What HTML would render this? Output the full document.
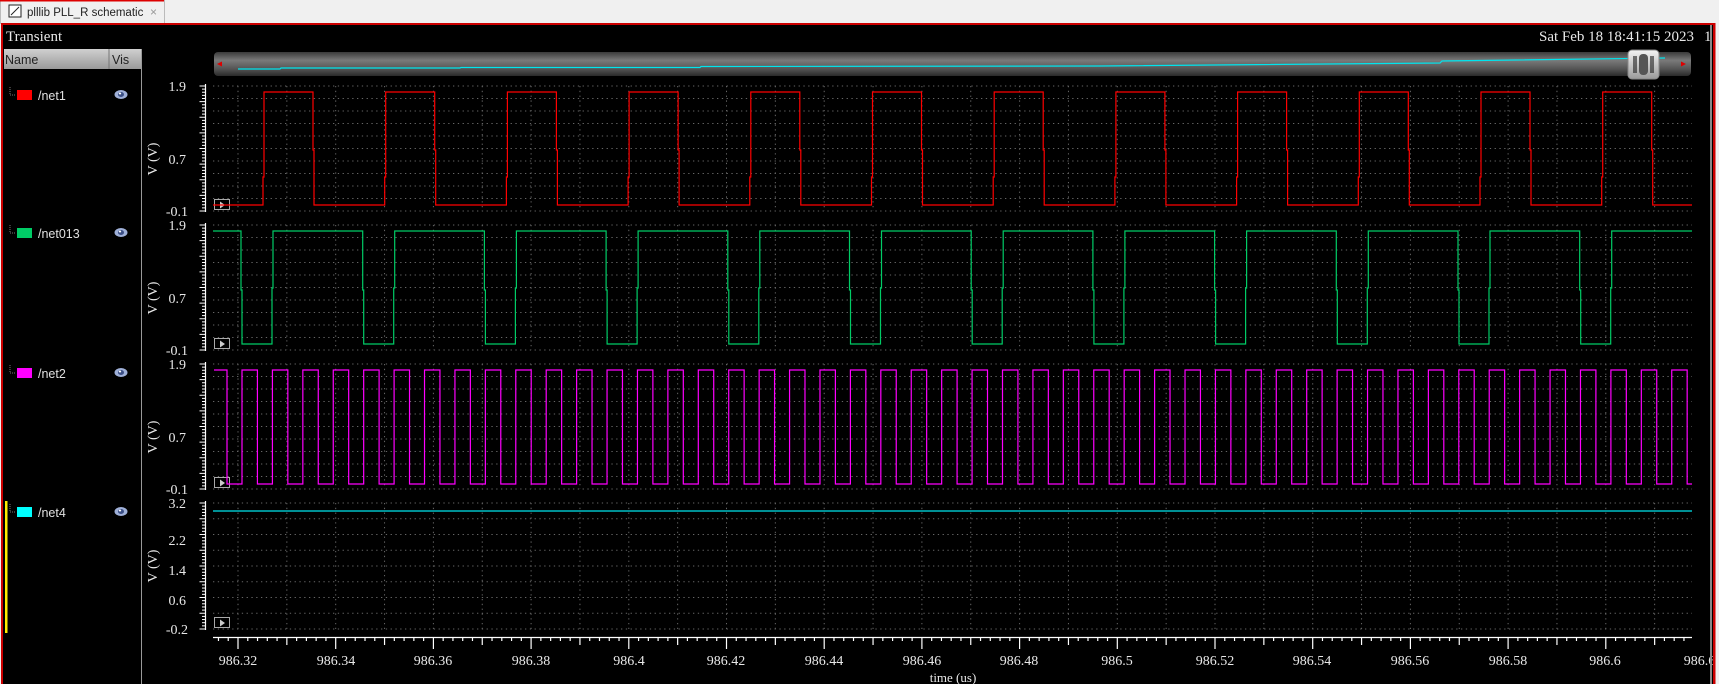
<!DOCTYPE html>
<html><head><meta charset="utf-8">
<style>
html,body{margin:0;padding:0;background:#f0f0f0;width:1719px;height:684px;overflow:hidden}
svg{display:block}
.s{font-family:"Liberation Serif",serif;fill:#e8e8e8}
.a{font-family:"Liberation Sans",sans-serif}
</style></head><body>
<svg id="sv" width="1719" height="684" viewBox="0 0 1719 684" xmlns="http://www.w3.org/2000/svg">
<defs>
<linearGradient id="hd" x1="0" y1="0" x2="0" y2="1"><stop offset="0" stop-color="#d0d0d0"/><stop offset="1" stop-color="#9a9a9a"/></linearGradient>
<linearGradient id="sb" x1="0" y1="0" x2="0" y2="1"><stop offset="0" stop-color="#3a3a3a"/><stop offset="0.35" stop-color="#7a7a7a"/><stop offset="0.7" stop-color="#555"/><stop offset="1" stop-color="#2a2a2a"/></linearGradient>
<linearGradient id="th" x1="0" y1="0" x2="0" y2="1"><stop offset="0" stop-color="#f4f4f4"/><stop offset="1" stop-color="#9a9a9a"/></linearGradient>
</defs>
<rect x="0" y="0" width="1719" height="684" fill="#f0f0f0"/>
<!-- tab -->
<rect x="0.5" y="0.5" width="164" height="23" fill="#f0f0f0" stroke="#bbb"/>
<rect x="0" y="0" width="164" height="1.5" fill="#d00"/>
<rect x="9" y="5" width="12" height="12" fill="#fff" stroke="#222"/>
<line x1="11" y1="15" x2="19" y2="7" stroke="#222"/>
<text x="27" y="16" class="a" font-size="11.5" fill="#222">plllib PLL_R schematic</text>
<text x="150" y="16" class="a" font-size="12" fill="#999">×</text>
<!-- frame -->
<rect x="1" y="23" width="1718" height="661" fill="#cc0000"/>
<rect x="3" y="25" width="1711" height="659" fill="#000"/>
<text x="6" y="41" class="s" font-size="15">Transient</text>
<text x="1694" y="41" class="s" font-size="15" text-anchor="end">Sat Feb 18 18:41:15 2023</text>
<text x="1704" y="41" class="s" font-size="15">1</text>
<!-- left panel -->
<rect x="4" y="49" width="137" height="20" fill="url(#hd)"/>
<line x1="109" y1="49" x2="109" y2="69" stroke="#777"/>
<text x="5" y="64" class="a" font-size="12.5" fill="#222">Name</text>
<text x="112" y="64" class="a" font-size="12.5" fill="#222">Vis</text>
<line x1="141.5" y1="49" x2="141.5" y2="684" stroke="#999"/>
<rect x="5" y="501" width="2.5" height="132" fill="#ffee00"/>
<g id="legend"></g>
<!-- scrollbar -->
<rect x="214" y="52" width="1477" height="24" rx="4" fill="url(#sb)"/>
<polyline points="238,69 280,69 281,68 460,68 461,67.5 700,67.5 701,66.5 1100,66 1440,63 1442,61 1665,58" fill="none" stroke="#00e5ee" stroke-width="1.2"/>
<path d="M217 64 l5 -2.5 v5z" fill="#d00"/>
<path d="M1686 64 l-5 -2.5 v5z" fill="#d00"/>
<rect x="1628" y="50" width="31" height="29" rx="4" fill="url(#th)" stroke="#888"/>
<rect x="1639" y="54" width="9" height="21" rx="4" fill="#555"/>
<line x1="1634" y1="56" x2="1634" y2="73" stroke="#222" stroke-width="1.2"/>
<line x1="1636" y1="56" x2="1636" y2="73" stroke="#222" stroke-width="1.2"/>
<line x1="1651" y1="56" x2="1651" y2="73" stroke="#222" stroke-width="1.2"/>
<line x1="1653" y1="56" x2="1653" y2="73" stroke="#222" stroke-width="1.2"/>
<g id="plot"></g>
<g class="s" font-size="14" text-anchor="end">
<text x="186" y="91">1.9</text><text x="186" y="164">0.7</text><text x="188" y="216">-0.1</text>
<text x="186" y="230">1.9</text><text x="186" y="303">0.7</text><text x="188" y="355">-0.1</text>
<text x="186" y="369">1.9</text><text x="186" y="442">0.7</text><text x="188" y="494">-0.1</text>
<text x="186" y="508">3.2</text><text x="186" y="545">2.2</text><text x="186" y="575">1.4</text><text x="186" y="605">0.6</text><text x="188" y="634">-0.2</text>
</g>
<g class="s" font-size="14" text-anchor="middle">
<text transform="translate(157,159) rotate(-90)">V (V)</text>
<text transform="translate(157,298) rotate(-90)">V (V)</text>
<text transform="translate(157,437) rotate(-90)">V (V)</text>
<text transform="translate(157,566) rotate(-90)">V (V)</text>
</g>
<g class="s" font-size="14" text-anchor="middle">
<text x="238" y="665">986.32</text><text x="336" y="665">986.34</text><text x="433" y="665">986.36</text><text x="531" y="665">986.38</text><text x="629" y="665">986.4</text><text x="726" y="665">986.42</text><text x="824" y="665">986.44</text><text x="922" y="665">986.46</text><text x="1019" y="665">986.48</text><text x="1117" y="665">986.5</text><text x="1215" y="665">986.52</text><text x="1312" y="665">986.54</text><text x="1410" y="665">986.56</text><text x="1508" y="665">986.58</text><text x="1605" y="665">986.6</text><text x="1703" y="665">986.62</text>
<text x="953" y="682" font-size="13">time (us)</text>
</g>
<g class="a" font-size="12.5" fill="#e0e0e0">
<text x="38" y="100">/net1</text><text x="38" y="238">/net013</text><text x="38" y="378">/net2</text><text x="38" y="517">/net4</text>
</g>
<rect x="1710" y="25" width="2" height="659" fill="#888"/>
<rect x="1713" y="23" width="2.5" height="661" fill="#cc0000"/>
<rect x="1715.5" y="23" width="3.5" height="661" fill="#f0f0f0"/>
</svg>
<script>
(function(){
var NS="http://www.w3.org/2000/svg",P=document.getElementById("plot"),L=document.getElementById("legend");
function el(t,a,p){var e=document.createElementNS(NS,t);for(var k in a)e.setAttribute(k,a[k]);(p||P).appendChild(e);return e;}
var panels=[[86,211,10],[225,350,10],[364,489,10],[503,629,8]];
var x0=213,x1=1692,step=48.85;
panels.forEach(function(p){
  var t=p[0],b=p[1],n=p[2];
  for(var i=0;i<=n;i++){var y=t+(b-t)*i/n;el("line",{x1:x0,y1:y,x2:x1,y2:y,stroke:"#666","stroke-dasharray":"1.3 3.5","stroke-width":1});}
  for(var x=238;x<=x1;x+=step){el("line",{x1:x,y1:t,x2:x,y2:b,stroke:"#666","stroke-dasharray":"1.3 3.5","stroke-width":1});}
  el("line",{x1:205.5,y1:t-2,x2:205.5,y2:b+1,stroke:"#fff","stroke-width":1.2});
  var m=40;for(var j=0;j<=m;j++){var y=t+(b-t)*j/m;var l=(j%5==0)?6:3.5;el("line",{x1:205.5-l,y1:y,x2:205.5,y2:y,stroke:"#fff","stroke-width":1});}
  el("rect",{x:214.5,y:b-11.5,width:15,height:10,fill:"#000",stroke:"#aaa"});
  el("path",{d:"M220 "+(b-9.5)+" l5 3.5 l-5 3.5z",fill:"#ccc"});
});
var d="M213 205";
for(var k=0;k<12;k++){var r=263+121.7*k;d+=" L"+r+" 205 L"+r+" 177 L"+(r+1)+" 177 L"+(r+1)+" 92 L"+(r+50)+" 92 L"+(r+50)+" 150 L"+(r+51)+" 150 L"+(r+51)+" 205";}
d+=" L1692 205";el("path",{d:d,fill:"none",stroke:"#ff0000","stroke-width":1.2});
d="M213 231";
for(var k=0;k<12;k++){var f=241+121.7*k;d+=" L"+f+" 231 L"+f+" 290 L"+(f+1)+" 290 L"+(f+1)+" 344 L"+(f+31)+" 344 L"+(f+31)+" 288 L"+(f+32)+" 288 L"+(f+32)+" 231";}
d+=" L1692 231";el("path",{d:d,fill:"none",stroke:"#00cc66","stroke-width":1.2});
d="M214 370";
for(var k=0;k<49;k++){var f=227+30.42*k,r=f+15;if(f>1692)break;d+=" L"+f+" 370 L"+f+" 484 L"+Math.min(r,1692)+" 484";if(r<1692)d+=" L"+r+" 484 L"+r+" 370";}
d+=" L1692 "+(d.slice(-3)=="484"?484:370);el("path",{d:d,fill:"none",stroke:"#ff00ff","stroke-width":1.2});
el("line",{x1:213,y1:511,x2:1692,y2:511,stroke:"#00e5ee","stroke-width":1.3});
el("line",{x1:213,y1:637.5,x2:1692,y2:637.5,stroke:"#fff","stroke-width":1.2});
for(var i=0;;i++){var x=238+9.77*(i-2);if(x>1693)break;if(x<213)continue;var l=(i-2)%10==0?12:((i-2)%5==0?8:4);if(i<2)l=((i-2)%5==0)?8:4;el("line",{x1:x,y1:637,x2:x,y2:637+l,stroke:"#fff","stroke-width":1.2});}
var rows=[[95,"#ff0000"],[233,"#00cc66"],[373,"#ff00ff"],[512,"#00ffff"]];
rows.forEach(function(r){var y=r[0];
 el("path",{d:"M10 "+(y-8)+" V"+y+" H16",fill:"none",stroke:"#777","stroke-dasharray":"1 1"},L);
 el("rect",{x:17,y:y-5,width:15,height:10,fill:r[1]},L);
 el("ellipse",{cx:121,cy:y-0.5,rx:6.5,ry:4.5,fill:"#9fb0d8"},L);
 el("ellipse",{cx:121,cy:y-0.5,rx:3,ry:2.5,fill:"#3b4f86"},L);
 el("ellipse",{cx:120,cy:y-1.5,rx:1.2,ry:1,fill:"#fff"},L);
});
})();
</script>
</body></html>
